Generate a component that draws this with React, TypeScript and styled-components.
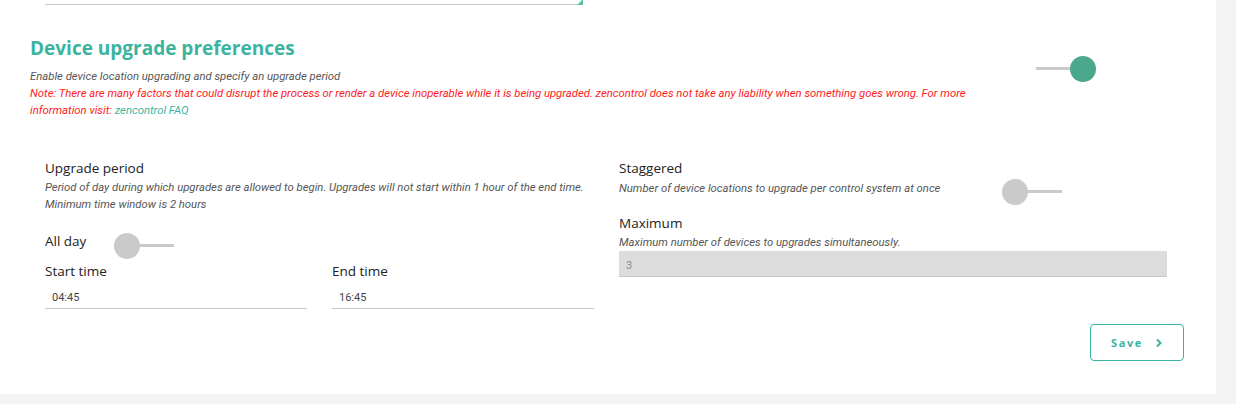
import { createGlobalStyle, styled } from "styled-components";
import { useState } from "react";

const GlobalStyle = createGlobalStyle`
  html, body {
    margin: 0;
    padding: 0;
    background: #f3f3f3;
  }
  * {
    box-sizing: border-box;
  }
`;

const Panel = styled.div`
  width: 1216px;
  height: 394px;
  background: #ffffff;
  display: flex;
  flex-direction: column;
`;

const PrevField = styled.div`
  position: relative;
  margin-left: 45px;
  width: 538px;
  height: 5px;
  border-bottom: 1px solid #c9c9c9;
  &::after {
    content: "";
    position: absolute;
    right: 0;
    bottom: -1px;
    border-style: solid;
    border-width: 0 0 6px 6px;
    border-color: transparent transparent #56c2a6 transparent;
  }
`;

const HeaderRow = styled.div`
  display: flex;
  align-items: flex-start;
  padding: 30px 0 0 30px;
`;

const HeaderText = styled.div`
  flex: 0 0 945px;
`;

const Title = styled.h2`
  margin: 0 0 7px;
  font-family: "Open Sans", sans-serif;
  font-weight: 700;
  font-size: 19px;
  line-height: 26px;
  color: #3bb49f;
`;

const Desc = styled.p<{ $warn?: boolean; $gap?: number }>`
  margin: ${(p) => p.$gap ?? 0}px 0 0;
  font-family: Roboto, "Liberation Sans", sans-serif;
  font-style: italic;
  font-size: 11.3px;
  line-height: 17px;
  color: ${(p) => (p.$warn ? "#ff1a1a" : "#555555")};
`;

const Link = styled.a`
  color: #3bb49f;
  text-decoration: none;
`;

const ToggleSlot = styled.div<{ $top: number; $left: number }>`
  margin-top: ${(p) => p.$top}px;
  margin-left: ${(p) => p.$left}px;
`;

const Track = styled.button`
  position: relative;
  display: block;
  flex: none;
  width: 60px;
  height: 26px;
  padding: 0;
  border: none;
  background: transparent;
  cursor: pointer;
  &::before {
    content: "";
    position: absolute;
    left: 0;
    right: 0;
    top: 11px;
    height: 3px;
    background: #cacaca;
  }
`;

const Thumb = styled.span<{ $on: boolean }>`
  position: absolute;
  top: 0;
  left: ${(p) => (p.$on ? "34px" : "0")};
  width: 26px;
  height: 26px;
  border-radius: 50%;
  background: ${(p) => (p.$on ? "#4aa98c" : "#cacaca")};
`;

const Settings = styled.div`
  display: grid;
  grid-template-columns: 549px 548px;
  column-gap: 25px;
  padding: 40px 0 0 45px;
`;

const Column = styled.div`
  display: flex;
  flex-direction: column;
`;

const Label = styled.div<{ $gap?: number }>`
  margin-top: ${(p) => p.$gap ?? 0}px;
  font-family: "Open Sans", sans-serif;
  font-size: 13.5px;
  line-height: 18px;
  color: #222222;
`;

const InlineRow = styled.div<{ $gap?: number }>`
  display: flex;
  align-items: flex-start;
  margin-top: ${(p) => p.$gap ?? 0}px;
`;

const RowText = styled.div`
  flex: 0 0 383px;
  padding-top: 3px;
`;

const Field = styled.div`
  display: flex;
  flex-direction: column;
`;

const TimeRow = styled.div`
  display: grid;
  grid-template-columns: 262px 262px;
  column-gap: 25px;
  margin-top: 3px;
`;

const Input = styled.input<{ $disabled?: boolean; $gap?: number }>`
  width: 100%;
  height: 26px;
  margin-top: ${(p) => p.$gap ?? 0}px;
  padding: 3px 7px 0;
  border: none;
  border-bottom: 1px solid #c8c8c8;
  background: ${(p) => (p.$disabled ? "#dcdcdc" : "#ffffff")};
  font-family: Roboto, "Liberation Sans", sans-serif;
  font-size: 11px;
  color: ${(p) => (p.$disabled ? "#8a8a8a" : "#444444")};
  outline: none;
`;

const Footer = styled.div`
  display: flex;
  justify-content: flex-end;
  padding: 0 32px 0 0;
  margin-top: auto;
  margin-bottom: 33px;
`;

const SaveButton = styled.button`
  display: flex;
  align-items: center;
  justify-content: center;
  gap: 12px;
  width: 94px;
  height: 37px;
  border: 1px solid #3bb49f;
  border-radius: 4px;
  background: #ffffff;
  font-family: "Open Sans", sans-serif;
  font-weight: 700;
  font-size: 11px;
  letter-spacing: 1.6px;
  color: #3bb49f;
  cursor: pointer;
`;

function Toggle({ on, onClick }: { on: boolean; onClick: () => void }) {
  return (
    <Track onClick={onClick} type="button">
      <Thumb $on={on} />
    </Track>
  );
}

export default function App() {
  const [enabled, setEnabled] = useState(true);
  const [allDay, setAllDay] = useState(false);
  const [staggered, setStaggered] = useState(false);
  const [start, setStart] = useState("04:45");
  const [end, setEnd] = useState("16:45");

  return (
    <>
      <GlobalStyle />
      <Panel>
        <PrevField />
        <HeaderRow>
          <HeaderText>
            <Title>Device upgrade preferences</Title>
            <Desc>Enable device location upgrading and specify an upgrade period</Desc>
            <Desc $warn>
              Note: There are many factors that could disrupt the process or render a device inoperable while it is
              being upgraded. zencontrol does not take any liability when something goes wrong. For more information
              visit: <Link href="#">zencontrol FAQ</Link>
            </Desc>
          </HeaderText>
          <ToggleSlot $top={21} $left={61}>
            <Toggle on={enabled} onClick={() => setEnabled(!enabled)} />
          </ToggleSlot>
        </HeaderRow>

        <Settings>
          <Column>
            <Label>Upgrade period</Label>
            <Desc $gap={2}>
              Period of day during which upgrades are allowed to begin. Upgrades will not start within 1 hour of the end
              time.
              <br />
              Minimum time window is 2 hours
            </Desc>
            <InlineRow $gap={19}>
              <Label>All day</Label>
              <ToggleSlot $top={1} $left={28}>
                <Toggle on={allDay} onClick={() => setAllDay(!allDay)} />
              </ToggleSlot>
            </InlineRow>
            <TimeRow>
              <Field>
                <Label>Start time</Label>
                <Input $gap={3} value={start} onChange={(e) => setStart(e.target.value)} />
              </Field>
              <Field>
                <Label>End time</Label>
                <Input $gap={3} value={end} onChange={(e) => setEnd(e.target.value)} />
              </Field>
            </TimeRow>
          </Column>
          <Column>
            <Label>Staggered</Label>
            <InlineRow>
              <RowText>
                <Desc>Number of device locations to upgrade per control system at once</Desc>
              </RowText>
              <ToggleSlot $top={2} $left={0}>
                <Toggle on={staggered} onClick={() => setStaggered(!staggered)} />
              </ToggleSlot>
            </InlineRow>
            <Label $gap={9}>Maximum</Label>
            <Desc $gap={2}>Maximum number of devices to upgrades simultaneously.</Desc>
            <Input $disabled value="3" readOnly />
          </Column>
        </Settings>

        <Footer>
          <SaveButton type="button">
            Save
            <svg width="8" height="10" viewBox="0 0 8 10">
              <path d="M2 1.5 L5.5 5 L2 8.5" fill="none" stroke="#3bb49f" strokeWidth="2" />
            </svg>
          </SaveButton>
        </Footer>
      </Panel>
    </>
  );
}
